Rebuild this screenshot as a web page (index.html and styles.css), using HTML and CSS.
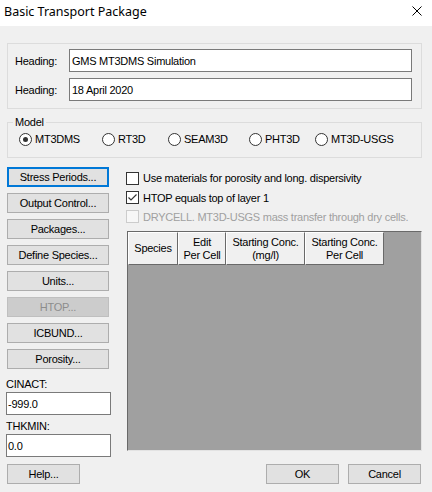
FILE: index.html
```html
<!doctype html>
<html lang="en">

<head>
    <meta charset="UTF-8" />
    <title>Basic Transport Package</title>
    <link rel="stylesheet" href="styles.css">
</head>

<body>
    <div class="window">
        <div class="titlebar">
            <span class="title">Basic Transport Package</span>
            <svg class="close-icon" width="10" height="10" viewBox="0 0 10 10">
                <path d="M0.5 0.5 L9.5 9.5 M9.5 0.5 L0.5 9.5" stroke="#000" stroke-width="1" fill="none" />
            </svg>
        </div>

        <div class="dialog">
            <div class="group headings">
                <div class="field-row">
                    <label>Heading:</label>
                    <input class="text-input" type="text" value="GMS MT3DMS Simulation">
                </div>
                <div class="field-row">
                    <label>Heading:</label>
                    <input class="text-input" type="text" value="18 April 2020">
                </div>
            </div>

            <fieldset class="group model">
                <legend>Model</legend>
                <div class="radio-row">
                    <span class="radio checked"><span class="radio-dot"></span>MT3DMS</span>
                    <span class="radio"><span class="radio-dot"></span>RT3D</span>
                    <span class="radio"><span class="radio-dot"></span>SEAM3D</span>
                    <span class="radio"><span class="radio-dot"></span>PHT3D</span>
                    <span class="radio"><span class="radio-dot"></span>MT3D-USGS</span>
                </div>
            </fieldset>

            <div class="main">
                <div class="side">
                    <div class="button-list">
                        <button class="btn focused">Stress Periods...</button>
                        <button class="btn">Output Control...</button>
                        <button class="btn">Packages...</button>
                        <button class="btn">Define Species...</button>
                        <button class="btn">Units...</button>
                        <button class="btn" disabled>HTOP...</button>
                        <button class="btn">ICBUND...</button>
                        <button class="btn">Porosity...</button>
                    </div>
                    <label class="side-label">CINACT:</label>
                    <input class="text-input small" type="text" value="-999.0">
                    <label class="side-label">THKMIN:</label>
                    <input class="text-input small" type="text" value="0.0">
                </div>

                <div class="panel">
                    <div class="check-row">
                        <span class="checkbox"></span>
                        Use materials for porosity and long. dispersivity
                    </div>
                    <div class="check-row">
                        <span class="checkbox">
                            <svg width="11" height="11" viewBox="0 0 11 11">
                                <path d="M1.5 5.5 L4 8 L9.5 2.5" stroke="#333" stroke-width="1.2" fill="none" />
                            </svg>
                        </span>
                        HTOP equals top of layer 1
                    </div>
                    <div class="check-row disabled">
                        <span class="checkbox"></span>
                        DRYCELL. MT3D-USGS mass transfer through dry cells.
                    </div>

                    <div class="grid">
                        <div class="grid-header">
                            <div class="col col-species">Species</div>
                            <div class="col col-edit">Edit<br>Per Cell</div>
                            <div class="col col-conc">Starting Conc.<br>(mg/l)</div>
                            <div class="col col-conc">Starting Conc.<br>Per Cell</div>
                        </div>
                    </div>
                </div>
            </div>

            <div class="footer">
                <button class="btn footer-btn">Help...</button>
                <span class="spacer"></span>
                <button class="btn footer-btn">OK</button>
                <button class="btn footer-btn">Cancel</button>
            </div>
        </div>
    </div>
</body>

</html>
```

FILE: styles.css
```css
body {
    margin: 0;
    background: #f0f0f0;
    font-family: "Liberation Sans", Arial, sans-serif;
    font-size: 11px;
    letter-spacing: -0.25px;
    color: #000;
}

.window {
    width: 432px;
    height: 492px;
    overflow: hidden;
}

.titlebar {
    height: 22px;
    padding: 0 10px 4px 4px;
    background: #fff;
    display: flex;
    align-items: center;
    justify-content: space-between;
}

.title {
    font-family: "Noto Sans", sans-serif;
    font-size: 12.5px;
    letter-spacing: 0;
}

.dialog {
    padding: 0 10px 0 7px;
}

/* group boxes */
.group {
    border: 1px solid #dcdcdc;
    box-sizing: border-box;
}

.headings {
    margin-top: 17px;
    height: 66px;
    padding: 5px 9px 7px 7px;
    display: flex;
    flex-direction: column;
    gap: 6px;
}

.field-row {
    display: flex;
    align-items: center;
}

.field-row label {
    width: 54px;
}

.text-input {
    flex: 1;
    height: 23px;
    box-sizing: border-box;
    margin: 0;
    padding: 0 2px;
    border: 1px solid #7a7a7a;
    background: #fff;
    font: inherit;
    letter-spacing: inherit;
    color: #000;
    outline: none;
}

.model {
    margin: 6px 0 0 0;
    padding: 4px 0 11px 11px;
}

.model legend {
    margin-left: -6px;
    padding: 0 2px;
    line-height: 14px;
}

.radio-row {
    display: grid;
    grid-template-columns: 83px 66px 81px 66px auto;
    height: 13px;
    align-items: center;
}

.radio {
    display: flex;
    align-items: center;
    gap: 3px;
    line-height: 13px;
}

.radio-dot {
    width: 13px;
    height: 13px;
    box-sizing: border-box;
    border: 1px solid #333;
    border-radius: 50%;
    background: #fff;
    display: flex;
    align-items: center;
    justify-content: center;
}

.radio.checked .radio-dot::after {
    content: "";
    width: 5px;
    height: 5px;
    border-radius: 50%;
    background: #333;
}

/* main area */
.main {
    display: flex;
    gap: 15px;
    margin-top: 9px;
}

.side {
    width: 105px;
    margin-left: -1px;
    display: flex;
    flex-direction: column;
}

.button-list {
    display: flex;
    flex-direction: column;
    gap: 6px;
    padding-left: 1px;
}

.btn {
    height: 20px;
    width: 102px;
    box-sizing: border-box;
    margin: 0;
    padding: 0;
    border: 1px solid #adadad;
    background: #e1e1e1;
    font: inherit;
    letter-spacing: inherit;
    color: #000;
}

.btn.focused {
    border-color: #0078d7;
    box-shadow: inset 0 0 0 1px #0078d7;
}

.btn:disabled {
    background: #cccccc;
    border-color: #bfbfbf;
    color: #8c8c8c;
}

.side-label {
    line-height: 14px;
    margin-top: 8px;
}

.side-label + .text-input {
    margin-top: 1px;
    flex: none;
    padding-left: 1px;
}

.text-input.small + .side-label {
    margin-top: 4px;
}

.panel {
    width: 296px;
    display: flex;
    flex-direction: column;
    margin-top: 1px;
}

.check-row {
    height: 20px;
    display: flex;
    align-items: center;
    gap: 4px;
}

.check-row + .check-row {
    height: 19px;
}

.checkbox {
    width: 13px;
    height: 13px;
    box-sizing: border-box;
    border: 1px solid #333;
    background: #fff;
    display: flex;
    align-items: center;
    justify-content: center;
}

.check-row.disabled {
    color: #a0a0a0;
}

.check-row.disabled .checkbox {
    border-color: #cccccc;
    background: #f7f7f7;
}

/* species grid */
.grid {
    margin: 5px 0 0 1px;
    height: 220px;
    box-sizing: border-box;
    background: #a0a0a0;
    border: 1px solid;
    border-color: #696969 #e3e3e3 #e3e3e3 #696969;
}

.grid-header {
    display: flex;
    height: 33px;
}

.col {
    box-sizing: border-box;
    background: #f0f0f0;
    border: 1px solid;
    border-color: #fff #696969 #696969 #fff;
    display: flex;
    align-items: center;
    justify-content: center;
    text-align: center;
    line-height: 13px;
}

.col-species {
    width: 50px;
}

.col-edit {
    width: 48px;
}

.col-conc {
    width: 79px;
}

/* footer buttons */
.footer {
    display: flex;
    gap: 9px;
    margin-top: 7px;
    padding-right: 1px;
}

.footer-btn {
    width: 73px;
}

.spacer {
    flex: 1;
}
```
